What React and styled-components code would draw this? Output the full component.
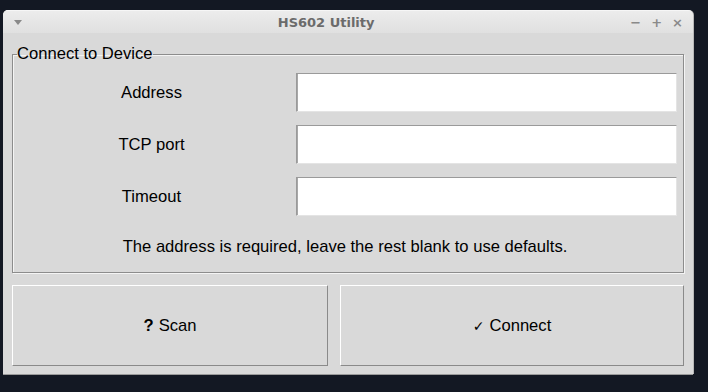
import React from "react";
import styled, { createGlobalStyle } from "styled-components";

const GlobalStyle = createGlobalStyle`
  body {
    margin: 0;
    background: #131823;
    font-family: "Liberation Sans", Arial, sans-serif;
  }
`;

const Desktop = styled.div`
  height: 392px;
  box-sizing: border-box;
  padding: 10px 0 0 3px;
`;

const Window = styled.div`
  width: 690px;
  height: 364px;
  background: #d9d9d9;
  border-radius: 5px 5px 0 0;
  display: flex;
  flex-direction: column;
  overflow: hidden;
  box-shadow: 1px 0 0 #b8b8b8, 0 1px 0 #9a9a9a;
`;

const TitleBar = styled.div`
  height: 23px;
  flex: none;
  display: flex;
  align-items: center;
  padding: 0 10px 0 11px;
  background: linear-gradient(#ececec, #e0e0e0);
  border-top: 1px solid #f6f6f6;
  box-sizing: border-box;
`;

const MenuArrow = styled.span`
  width: 0;
  height: 0;
  border-left: 4px solid transparent;
  border-right: 4px solid transparent;
  border-top: 5px solid #8a8a8a;
`;

const Title = styled.div`
  flex: 1;
  text-align: center;
  font-family: "DejaVu Sans", sans-serif;
  font-weight: 700;
  font-size: 13px;
  color: #6b6b6b;
`;

const Controls = styled.div`
  display: flex;
  gap: 10px;
  color: #8a8a8a;
  font-family: "DejaVu Sans", sans-serif;
  font-weight: 700;
  font-size: 13px;
`;

const Body = styled.div`
  flex: 1;
  display: flex;
  flex-direction: column;
  padding: 12px 9px 8px 9px;
  font-size: 16.6px;
`;

const Group = styled.fieldset`
  margin: 0;
  padding: 10px 6px 0 0;
  border: 1px solid #8c8c8c;
  box-shadow: inset 1px 1px 0 #f4f4f4, 1px 1px 0 #f4f4f4;
  min-width: 0;
`;

const Legend = styled.legend`
  padding: 0;
  margin-left: 4px;
  font-size: 16.6px;
  line-height: 18px;
  color: #000;
`;

const Form = styled.div`
  display: grid;
  grid-template-columns: 1fr 381px;
  grid-auto-rows: 39px;
  column-gap: 6px;
  row-gap: 13px;
`;

const Label = styled.label`
  align-self: center;
  text-align: center;
  color: #000;
`;

const Input = styled.input`
  margin: 0;
  height: 39px;
  box-sizing: border-box;
  background: #fff;
  border: 1px solid;
  border-color: #9a9a9a #e4e4e4 #e4e4e4 #9a9a9a;
  box-shadow: inset 1px 0 0 #a8a8a8;
  outline: none;
`;

const Note = styled.p`
  margin: 0;
  padding: 22px 0 16px;
  text-align: center;
  line-height: 18px;
  color: #000;
`;

const Buttons = styled.div`
  margin-top: 12px;
  display: grid;
  grid-template-columns: 316px 344px;
  column-gap: 12px;
  flex: 1;
`;

const Button = styled.button`
  margin: 0;
  background: #d9d9d9;
  border: 1px solid;
  border-color: #fff #8a8a8a #8a8a8a #fff;
  font-family: "Liberation Sans", Arial, sans-serif;
  font-size: 16.6px;
  color: #000;
  display: flex;
  align-items: center;
  justify-content: center;
  gap: 5px;
`;

const Glyph = styled.span`
  font-weight: ${(p) => (p.$bold ? 700 : 400)};
  font-family: ${(p) => (p.$bold ? '"Liberation Sans", Arial, sans-serif' : '"DejaVu Sans", sans-serif')};
  font-size: ${(p) => (p.$bold ? "16.6px" : "14px")};
`;

const fields = ["Address", "TCP port", "Timeout"];

export default function App() {
  return (
    <>
      <GlobalStyle />
      <Desktop>
        <Window>
          <TitleBar>
            <MenuArrow />
            <Title>HS602 Utility</Title>
            <Controls>
              <span>−</span>
              <span>+</span>
              <span>×</span>
            </Controls>
          </TitleBar>
          <Body>
            <Group>
              <Legend>Connect to Device</Legend>
              <Form>
                {fields.map((f) => (
                  <React.Fragment key={f}>
                    <Label>{f}</Label>
                    <Input />
                  </React.Fragment>
                ))}
              </Form>
              <Note>The address is required, leave the rest blank to use defaults.</Note>
            </Group>
            <Buttons>
              <Button>
                <Glyph $bold>?</Glyph> Scan
              </Button>
              <Button>
                <Glyph>✓</Glyph> Connect
              </Button>
            </Buttons>
          </Body>
        </Window>
      </Desktop>
    </>
  );
}
